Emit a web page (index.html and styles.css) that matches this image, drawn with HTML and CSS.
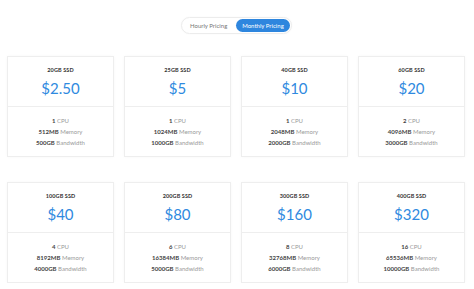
FILE: index.html
```html
<!DOCTYPE html>
<html>
<head>
<meta charset="utf-8">
<link rel="stylesheet" href="styles.css">
</head>
<body>
<div class="page">
  <div class="toggle-row">
    <div class="toggle">
      <span class="opt">Hourly Pricing</span>
      <span class="opt active">Monthly Pricing</span>
    </div>
  </div>
  <div class="grid">
    <div class="card"><div class="top"><div class="name">20GB SSD</div><div class="price">$2.50</div></div><div class="specs"><div><b>1</b> CPU</div><div><b>512MB</b> Memory</div><div><b>500GB</b> Bandwidth</div></div></div>
    <div class="card"><div class="top"><div class="name">25GB SSD</div><div class="price">$5</div></div><div class="specs"><div><b>1</b> CPU</div><div><b>1024MB</b> Memory</div><div><b>1000GB</b> Bandwidth</div></div></div>
    <div class="card"><div class="top"><div class="name">40GB SSD</div><div class="price">$10</div></div><div class="specs"><div><b>1</b> CPU</div><div><b>2048MB</b> Memory</div><div><b>2000GB</b> Bandwidth</div></div></div>
    <div class="card"><div class="top"><div class="name">60GB SSD</div><div class="price">$20</div></div><div class="specs"><div><b>2</b> CPU</div><div><b>4096MB</b> Memory</div><div><b>3000GB</b> Bandwidth</div></div></div>
    <div class="card"><div class="top"><div class="name">100GB SSD</div><div class="price">$40</div></div><div class="specs"><div><b>4</b> CPU</div><div><b>8192MB</b> Memory</div><div><b>4000GB</b> Bandwidth</div></div></div>
    <div class="card"><div class="top"><div class="name">200GB SSD</div><div class="price">$80</div></div><div class="specs"><div><b>6</b> CPU</div><div><b>16384MB</b> Memory</div><div><b>5000GB</b> Bandwidth</div></div></div>
    <div class="card"><div class="top"><div class="name">300GB SSD</div><div class="price">$160</div></div><div class="specs"><div><b>8</b> CPU</div><div><b>32768MB</b> Memory</div><div><b>6000GB</b> Bandwidth</div></div></div>
    <div class="card"><div class="top"><div class="name">400GB SSD</div><div class="price">$320</div></div><div class="specs"><div><b>16</b> CPU</div><div><b>65536MB</b> Memory</div><div><b>10000GB</b> Bandwidth</div></div></div>
  </div>
</div>
</body>
</html>
```
FILE: styles.css
```css
* { box-sizing: border-box; }
html, body { margin: 0; padding: 0; background: #fff; }
body { font-family: "Lato", "Open Sans", sans-serif; color: #333; overflow: hidden; }
.page { padding: 17px 9px 0 7px; }
.toggle-row { display: flex; justify-content: center; padding-left: 1px; }
.toggle {
  display: flex; align-items: center; height: 17px; width: 111px;
  border: 1px solid #ececec; border-radius: 9px; padding: 0 1px 0 8px;
  justify-content: space-between; box-shadow: 0 0 2px rgba(0,0,0,0.04);
}
.opt { font-size: 6px; color: #777; line-height: 12px; }
.opt.active {
  background: #2e86de; color: #fff; border-radius: 7px; height: 13px; line-height: 13px;
  padding: 0 6px; width: 54px; text-align: center;
}
.grid {
  margin-top: 22px; display: grid; grid-template-columns: repeat(4, 1fr);
  column-gap: 10px; row-gap: 25px;
}
.card {
  border: 1px solid #eeeeee; background: #fff; text-align: center;
  box-shadow: 0 0 3px rgba(0,0,0,0.03);
}
.top { padding: 9px 0 8px; border-bottom: 1px solid #eeeeee; }
.name { font-size: 5.5px; font-weight: 700; line-height: 8px; color: #333; letter-spacing: 0.1px; }
.price { font-size: 15px; line-height: 20px; margin-top: 4px; color: #2f8ae0; font-weight: 400; }
.specs { padding: 8px 0 8px; font-size: 6px; line-height: 11px; color: #9a9a9a; }
.specs b { color: #444; font-weight: 700; }
```
